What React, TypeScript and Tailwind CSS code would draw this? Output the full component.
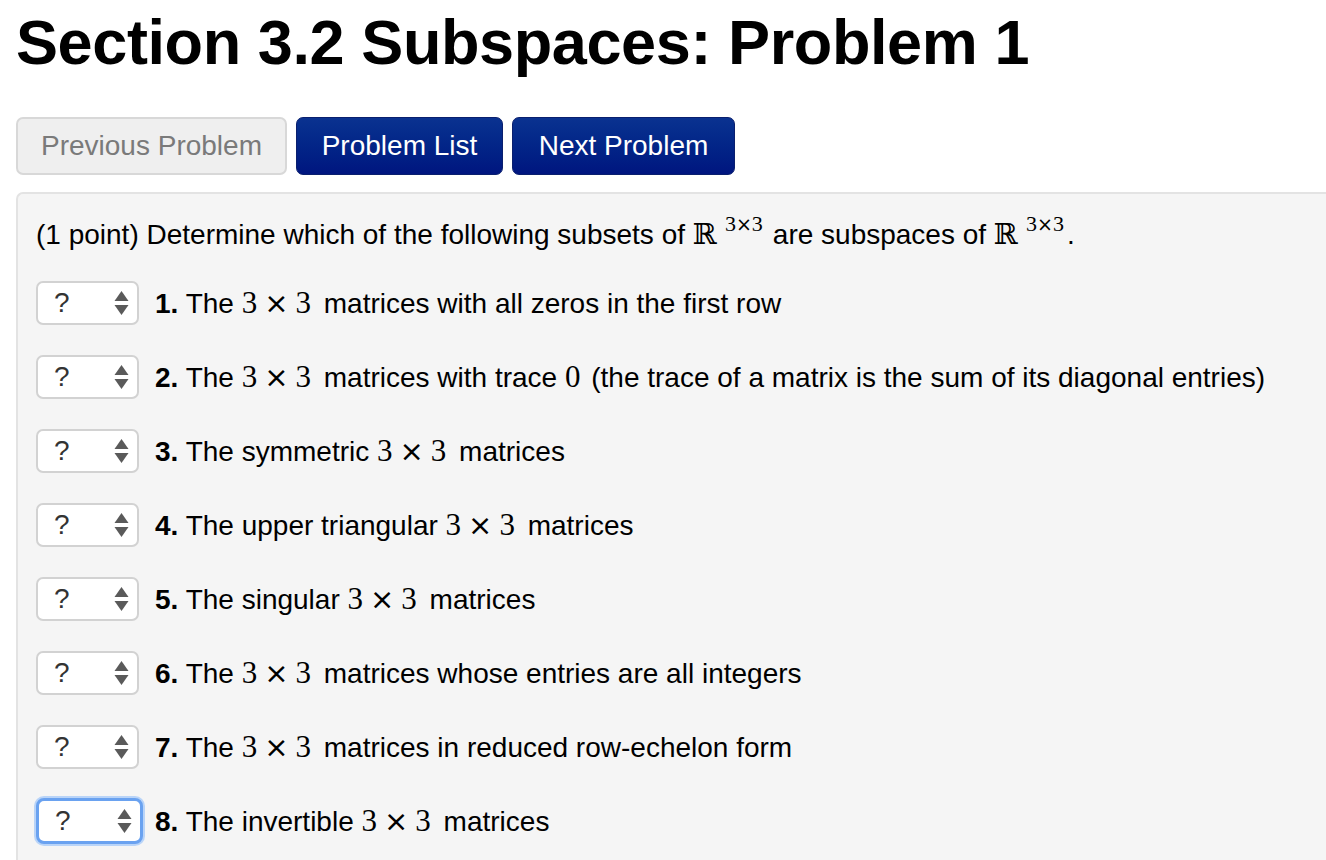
import React from "react";

const M = ({ children }: { children: React.ReactNode }) => (
  <span className="font-['Liberation_Serif',serif] text-[31px] leading-none">{children}</span>
);

const Times = () => (
  <span className="mr-[5px]">
    <M>
      3
      <span className="mx-[7px] font-['DejaVu_Sans',sans-serif] text-[29px] leading-none">×</span>
      3
    </M>
  </span>
);

const Select = ({ focused }: { focused?: boolean }) => (
  <div
    className={
      focused
        ? "relative flex h-[46px] w-[107px] shrink-0 items-center rounded-[8px] border-[3px] border-[#6aa2f0] bg-white shadow-[0_0_0_2px_#b9d4f8]"
        : "relative flex h-[44px] w-[103px] shrink-0 items-center rounded-[7px] border-2 border-[#d2d2d2] bg-white"
    }
  >
    <span className="absolute left-[16px] top-1/2 -translate-y-1/2 text-[28px] leading-none text-[#333]">?</span>
    <svg className="absolute right-[8px] top-1/2 -translate-y-1/2" width="15" height="26" viewBox="0 0 15 26">
      <polygon points="7.5,1 14.5,11 0.5,11" fill="#5a5a5a" />
      <polygon points="0.5,15 14.5,15 7.5,25" fill="#5a5a5a" />
    </svg>
  </div>
);

const rows: React.ReactNode[] = [
  <>The <Times /> matrices with all zeros in the first row</>,
  <>The <Times /> matrices with trace <span className="mr-[3px]"><M>0</M></span> (the trace of a matrix is the sum of its diagonal entries)</>,
  <>The symmetric <Times /> matrices</>,
  <>The upper triangular <Times /> matrices</>,
  <>The singular <Times /> matrices</>,
  <>The <Times /> matrices whose entries are all integers</>,
  <>The <Times /> matrices in reduced row-echelon form</>,
  <>The invertible <Times /> matrices</>,
];

const R = () => (
  <span className="font-['DejaVu_Serif',serif] text-[29px]">ℝ</span>
);
const Sup = ({ gap }: { gap?: boolean }) => (
  <span
    className={
      gap
        ? "relative top-[-13px] ml-[8px] mr-[10px] font-['Liberation_Serif',serif] text-[22px]"
        : "relative top-[-13px] ml-[8px] mr-[3px] font-['Liberation_Serif',serif] text-[22px]"
    }
  >
    3<span className="font-['DejaVu_Sans',sans-serif] text-[19px]">×</span>3
  </span>
);

export default function App() {
  return (
    <div className="min-h-[860px] overflow-hidden bg-white font-['Liberation_Sans',Arial,sans-serif] text-black">
      <div className="pl-[16px]">
        <h1 className="pt-[6px] text-[63px] font-bold leading-[72px] tracking-[-0.4px]">
          Section 3.2 Subspaces: Problem 1
        </h1>
        <div className="mt-[39px] flex gap-[9px]">
          <button className="h-[58px] w-[271px] rounded-[7px] border-2 border-[#d8d8d8] bg-[#efefef] text-[28px] text-[#7a7a7a]">
            Previous Problem
          </button>
          <button className="h-[58px] w-[207px] rounded-[7px] border border-[#0a1f6e] bg-gradient-to-b from-[#0a3290] to-[#00157f] text-[28px] text-white">
            Problem List
          </button>
          <button className="h-[58px] w-[223px] rounded-[7px] border border-[#0a1f6e] bg-gradient-to-b from-[#0a3290] to-[#00157f] text-[28px] text-white">
            Next Problem
          </button>
        </div>
        <div className="mt-[17px] w-[1330px] rounded-tl-[7px] border-l-2 border-t-2 border-[#e3e3e3] bg-[#f5f5f5] pb-[40px] pl-[18px] pt-[25px]">
          <div className="h-[30px] whitespace-nowrap text-[28px] leading-[30px]">
            (1 point) Determine which of the following subsets of <R />
            <Sup gap />are subspaces of <R />
            <Sup />.
          </div>
          <div className="mt-[32px] flex flex-col gap-[30px]">
            {rows.map((r, i) => (
              <div key={i} className="flex h-[44px] items-center">
                <div className="flex w-[119px] shrink-0 items-center">
                  <Select focused={i === 7} />
                </div>
                <div className="whitespace-nowrap text-[28px] leading-[30px]">
                  <span className="font-bold">{i + 1}.</span> {r}
                </div>
              </div>
            ))}
          </div>
        </div>
      </div>
    </div>
  );
}
